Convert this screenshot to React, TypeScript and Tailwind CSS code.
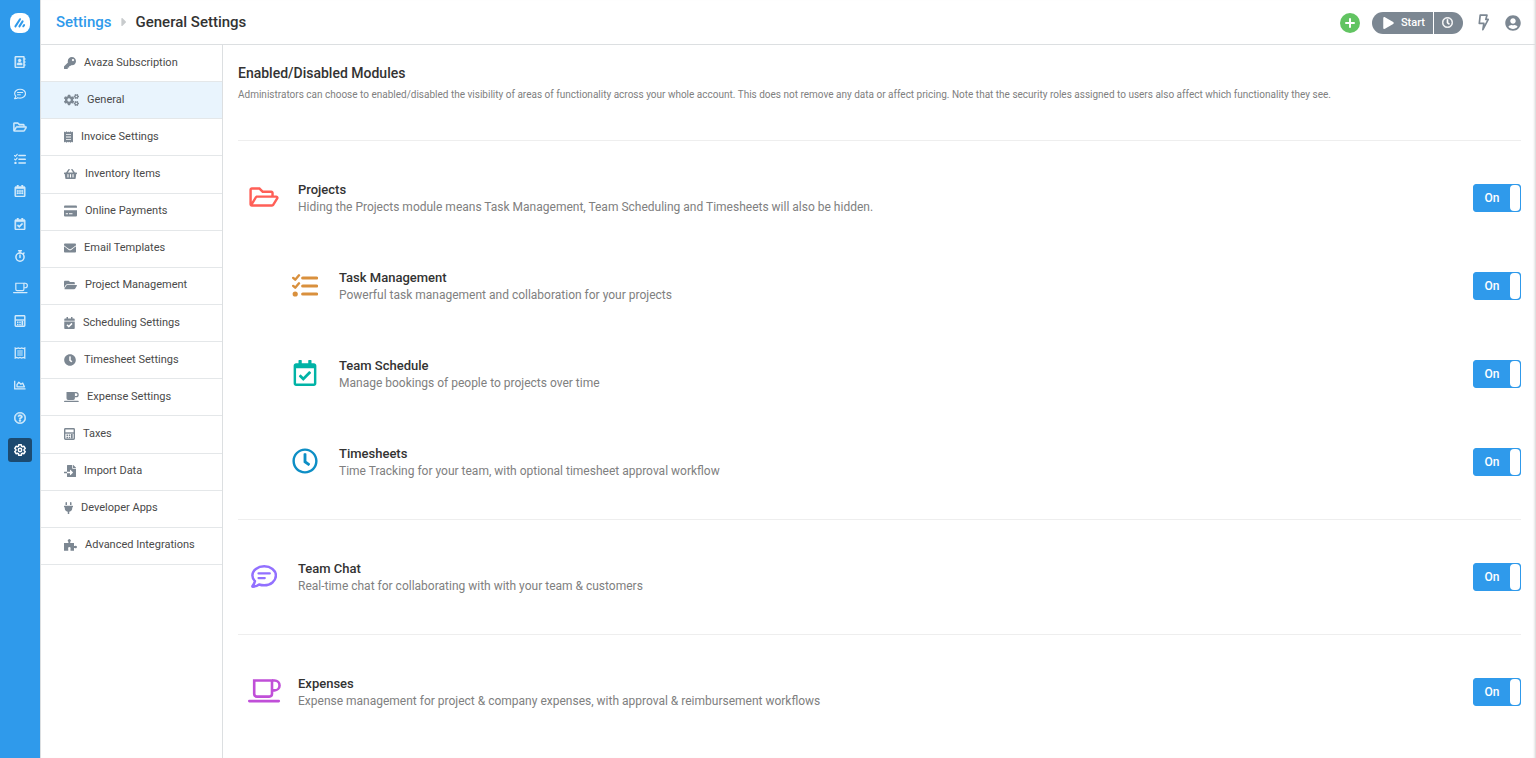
import type { ReactNode } from 'react';
import {
  FaCalendarCheck,
  FaCaretRight,
  FaClock,
  FaCogs,
  FaEnvelope,
  FaFileImport,
  FaFolderOpen,
  FaKey,
  FaPlay,
  FaPlug,
  FaRegAddressBook,
  FaRegCalendarAlt,
  FaRegCalendarCheck,
  FaRegClock,
  FaRegFolderOpen,
  FaRegQuestionCircle,
  FaShoppingBasket,
  FaUserCircle,
} from 'react-icons/fa';

interface IconProps {
  className?: string;
}

// icons
const LogoIcon = ({ className }: IconProps) => (
  <svg viewBox="0 0 20 20" className={className} fill="none" stroke="currentColor" strokeLinecap="round">
    <path d="M5.4 13.4 10 6.2M9.4 13.4 12.600 8.400" strokeWidth="2" />
    <path d="M13.300 13.300 14.100 12.100" strokeWidth="2" />
  </svg>
);

const CommentIcon = ({ className }: IconProps) => (
  <svg
    viewBox="0 0 26 23"
    className={className}
    fill="none"
    stroke="currentColor"
    strokeWidth="2.5"
    strokeLinecap="round"
    strokeLinejoin="round"
  >
    <path d="M13.2 1.3C6.7 1.3 1.4 5.4 1.4 10.4c0 2.2 1 4.200 2.600 5.700-.4 1.900-1.300 3.400-2.500 4.900-.3.4-.1.7.4.7 2.600-.1 4.700-1 6.200-2.200 1.500.5 3.200.8 5.100.8 6.500 0 11.700-4.400 11.700-9.700S19.700 1.300 13.200 1.300Z" />
    <path d="M7.500 8.400h11.300M7.500 13.100h6.300" strokeWidth="2.200" />
  </svg>
);

const TasksIcon = ({ className }: IconProps) => (
  <svg
    viewBox="0 0 26 23"
    className={className}
    fill="none"
    stroke="currentColor"
    strokeLinecap="round"
    strokeLinejoin="round"
  >
    <path d="M10.700 4h13.800M10.700 12h13.800M10.700 20h13.800" strokeWidth="3.200" />
    <path d="M1.200 3.900 3.200 5.700 7 1.300M1.200 11.900l2 1.800L7 9.300" strokeWidth="2.400" />
    <circle cx="3.200" cy="20" r="2.600" fill="currentColor" stroke="none" />
  </svg>
);

const CupIcon = ({ className }: IconProps) => (
  <svg viewBox="0 0 33 24" className={className} fill="none" stroke="currentColor" strokeWidth="2.600">
    <path d="M6.200 1.500H24v13.300a2.800 2.800 0 0 1-2.800 2.800H9a2.800 2.800 0 0 1-2.800-2.800V1.500Z" />
    <path d="M24 1.500h2.600a4.900 4.900 0 0 1 0 9.900H24" />
    <path d="M1.300 22.100h29.500" strokeLinecap="round" />
  </svg>
);

const CupSolidIcon = ({ className }: IconProps) => (
  <svg viewBox="0 0 33 24" className={className} fill="none" stroke="currentColor" strokeWidth="2.800">
    <path d="M5.500 1h18.500v14a3.500 3.500 0 0 1-3.500 3.500H9A3.500 3.500 0 0 1 5.500 15Z" fill="currentColor" stroke="none" />
    <path d="M23.500 2.400h3a4.500 4.500 0 0 1 0 9h-3" />
    <path d="M1.500 21.800h29.500" strokeLinecap="round" />
  </svg>
);

const StopwatchIcon = ({ className }: IconProps) => (
  <svg viewBox="0 0 22 24" className={className} fill="none" stroke="currentColor" strokeWidth="3" strokeLinecap="round">
    <circle cx="11" cy="14.200" r="8.200" />
    <path d="M11 10v5M8.200 1.500h5.600M11 1.500v4M17.400 7.600l1.600-1.600" />
  </svg>
);

const CalculatorIcon = ({ className }: IconProps) => (
  <svg viewBox="0 0 22 24" className={className} fill="none" stroke="currentColor">
    <rect x="1.400" y="1.400" width="19.200" height="21.200" rx="1.500" strokeWidth="2.800" />
    <path d="M2 10h18" strokeWidth="2.800" />
    <path d="M5 14.500h3M9.500 14.500h3M5 19h3M9.500 19h3" strokeWidth="3" />
    <path d="M15.700 12v9" strokeWidth="3.400" />
  </svg>
);

const ReceiptIcon = ({ className }: IconProps) => (
  <svg viewBox="0 0 22 24" className={className} fill="none" stroke="currentColor" strokeWidth="2.600">
    <path d="M1.500 2 4.500 3.200 7.500 2l3.500 1.200L14.500 2l3 1.200L20.500 2v20l-3-1.200-3 1.200-3.500-1.200L7.500 22l-3-1.200L1.500 22Z" />
    <path d="M5.500 8h11M5.500 12h11M5.500 16h11" strokeWidth="2.200" />
  </svg>
);

const ReceiptSolidIcon = ({ className }: IconProps) => (
  <svg viewBox="0 0 18 24" className={className} fill="currentColor">
    <path
      fillRule="evenodd"
      d="M0 .8 2.400 2.400 5 .4l2.600 2L9 1l1.400 1.400 2.600-2 2.600 2L18 .8v22.400l-2.400-1.600-2.600 2-2.600-2L9 23l-1.400-1.400-2.600 2-2.600-2L0 23.200ZM4 6.400v1.800h10V6.400ZM4 11.100v1.800h10v-1.800ZM4 15.800v1.800h10v-1.800Z"
    />
  </svg>
);

const ChartIcon = ({ className }: IconProps) => (
  <svg viewBox="0 0 26 20" className={className} fill="none" stroke="currentColor" strokeWidth="2.800" strokeLinejoin="round">
    <path d="M1.500 1v17.500H25" />
    <path d="M6.500 14V9l4-5 4.500 4.500 4-2.500 3.500 8Z" />
  </svg>
);

const GearIcon = ({ className }: IconProps) => (
  <svg viewBox="0 0 24 24" className={className} fill="none" stroke="currentColor" strokeWidth="3" strokeLinejoin="round">
    <path d="M9.500 1.500h5l.6 3 1.900 1.100 2.900-1 2.500 4.300L20.100 11v2l2.300 2.100-2.500 4.300-2.900-1-1.900 1.100-.6 3h-5l-.6-3L7 18.400l-2.900 1-2.500-4.300L3.900 13v-2L1.600 8.900l2.500-4.300 2.900 1 1.900-1.100Z" />
    <circle cx="12" cy="12" r="3.400" />
  </svg>
);

const CardIcon = ({ className }: IconProps) => (
  <svg viewBox="0 0 26 22" className={className} fill="currentColor">
    <path d="M2 0h22a2 2 0 0 1 2 2v2.500H0V2a2 2 0 0 1 2-2Z" />
    <path fillRule="evenodd" d="M0 9.500h26V20a2 2 0 0 1-2 2H2a2 2 0 0 1-2-2ZM3.500 15.500v2H8v-2ZM10 15.500v2h7v-2Z" />
  </svg>
);

const PuzzleIcon = ({ className }: IconProps) => (
  <svg viewBox="0 0 26 23" className={className} fill="currentColor">
    <path d="M0 7.500h8.800V5.200a3 3 0 1 1 3.600 0v2.300H20V13.500h1.500a2.600 2.600 0 1 1 0 4H20V23h-7v-4a2.500 2.500 0 1 0-4.500 0v4H0Z" />
  </svg>
);

const BoltIcon = ({ className }: IconProps) => (
  <svg viewBox="0 0 12 18" className={className} fill="none" stroke="currentColor" strokeWidth="1.800" strokeLinejoin="round">
    <path d="M2.400 1h7.400L8.500 5.600h2.700L5.300 16.800l1.100-6.800H1.400Z" />
  </svg>
);

const PlusIcon = ({ className }: IconProps) => (
  <svg viewBox="0 0 12 12" className={className} fill="none" stroke="currentColor" strokeWidth="2" strokeLinecap="round">
    <path d="M6 2v8M2 6h8" />
  </svg>
);

const railItems = [
  { label: 'Contacts', icon: <FaRegAddressBook className="w-3 h-3 stroke-current stroke-[20px]" /> },
  { label: 'Chat', icon: <CommentIcon className="w-3 h-3" /> },
  { label: 'Projects', icon: <FaRegFolderOpen className="w-[14px] h-3 stroke-current stroke-[20px]" /> },
  { label: 'Tasks', icon: <TasksIcon className="w-3 h-3" /> },
  { label: 'Calendar', icon: <FaRegCalendarAlt className="w-3 h-3 stroke-current stroke-[20px]" /> },
  { label: 'Schedule', icon: <FaRegCalendarCheck className="w-3 h-3 stroke-current stroke-[20px]" /> },
  { label: 'Timesheets', icon: <StopwatchIcon className="w-3 h-3" /> },
  { label: 'Expenses', icon: <CupIcon className="w-[15px] h-3" /> },
  { label: 'Estimates', icon: <CalculatorIcon className="w-3 h-3" /> },
  { label: 'Invoices', icon: <ReceiptIcon className="w-3 h-3" /> },
  { label: 'Reports', icon: <ChartIcon className="w-3 h-3" /> },
  { label: 'Help', icon: <FaRegQuestionCircle className="w-3 h-3 stroke-current stroke-[20px]" /> },
  { label: 'Settings', icon: <GearIcon className="w-3 h-3" />, active: true },
];

const navItems = [
  { label: 'Avaza Subscription', icon: <FaKey className="w-3 h-3" /> },
  { label: 'General', icon: <FaCogs className="w-[15px] h-3" />, active: true },
  { label: 'Invoice Settings', icon: <ReceiptSolidIcon className="w-[9px] h-3" /> },
  { label: 'Inventory Items', icon: <FaShoppingBasket className="w-[13px] h-3" /> },
  { label: 'Online Payments', icon: <CardIcon className="w-[13px] h-3" /> },
  { label: 'Email Templates', icon: <FaEnvelope className="w-3 h-3" /> },
  { label: 'Project Management', icon: <FaFolderOpen className="w-[13px] h-3" /> },
  { label: 'Scheduling Settings', icon: <FaCalendarCheck className="w-[11px] h-3" /> },
  { label: 'Timesheet Settings', icon: <FaClock className="w-3 h-3" /> },
  { label: 'Expense Settings', icon: <CupSolidIcon className="w-[15px] h-3" /> },
  { label: 'Taxes', icon: <CalculatorIcon className="w-[11px] h-3" /> },
  { label: 'Import Data', icon: <FaFileImport className="w-3 h-3" /> },
  { label: 'Developer Apps', icon: <FaPlug className="w-[9px] h-3" /> },
  { label: 'Advanced Integrations', icon: <PuzzleIcon className="w-[13px] h-3" /> },
];

interface Module {
  title: string;
  description: string;
  icon: ReactNode;
  nested?: boolean;
}

const sections: Module[][] = [
  [
    {
      title: 'Projects',
      description: 'Hiding the Projects module means Task Management, Team Scheduling and Timesheets will also be hidden.',
      icon: <FaRegFolderOpen className="w-[30px] h-[26px] text-[#ff5f57]" />,
    },
    {
      title: 'Task Management',
      description: 'Powerful task management and collaboration for your projects',
      icon: <TasksIcon className="w-[26px] h-[23px] text-[#d9903d]" />,
      nested: true,
    },
    {
      title: 'Team Schedule',
      description: 'Manage bookings of people to projects over time',
      icon: <FaRegCalendarCheck className="w-[26px] h-[26px] text-[#00b3a6]" />,
      nested: true,
    },
    {
      title: 'Timesheets',
      description: 'Time Tracking for your team, with optional timesheet approval workflow',
      icon: <FaRegClock className="w-[26px] h-[26px] text-[#0d8ec5]" />,
      nested: true,
    },
  ],
  [
    {
      title: 'Team Chat',
      description: 'Real-time chat for collaborating with with your team & customers',
      icon: <CommentIcon className="w-[26px] h-[23px] text-[#9270ff]" />,
    },
  ],
  [
    {
      title: 'Expenses',
      description: 'Expense management for project & company expenses, with approval & reimbursement workflows',
      icon: <CupIcon className="w-[33px] h-6 text-[#c04fd8]" />,
    },
  ],
];

const Rail = () => (
  <nav className="flex flex-col items-center shrink-0 w-10 pt-[13px] bg-[#2f9aeb] text-[#d5ebfb]">
    <a
      href="#home"
      aria-label="Home"
      className="flex items-center justify-center w-5 h-5 rounded-lg bg-white text-[#2f9aeb]"
    >
      <LogoIcon className="w-5 h-5" />
    </a>
    <ul className="flex flex-col justify-between h-[412px] mt-[17px]">
      {railItems.map(({ label, icon, active }) => (
        <li key={label}>
          <a
            href={`#${label.toLowerCase()}`}
            aria-label={label}
            className={`flex items-center justify-center w-6 h-6 rounded-[3px] ${active ? 'bg-[#1c4a70] text-white' : ''}`}
          >
            {icon}
          </a>
        </li>
      ))}
    </ul>
  </nav>
);

const Header = () => (
  <header className="flex items-center justify-between h-[45px] px-[15px] border-b border-[#dcdfe1]">
    <h1 className="flex items-center text-[15px] font-medium">
      <a href="#settings" className="text-[#2f9aeb]">
        Settings
      </a>
      <FaCaretRight className="w-[14px] h-[14px] mx-[5px] text-[#c8cbcd]" />
      <span>General Settings</span>
    </h1>
    <div className="flex items-center pt-px text-[#7c8792]">
      <button
        type="button"
        aria-label="Add"
        className="flex items-center justify-center w-5 h-5 mr-3 rounded-full bg-[#62c462] text-white"
      >
        <PlusIcon className="w-3 h-3" />
      </button>
      <div className="flex h-[22px] mr-[15px] rounded-full bg-[#7c8792] text-white overflow-hidden">
        <button type="button" className="flex items-center gap-[7px] pl-[11px] pr-2 text-[11px] leading-[18px] font-medium">
          <FaPlay className="w-[11px] h-3" />
          Start
        </button>
        <button type="button" aria-label="Timer" className="pl-2 pr-[10px] border-l border-white">
          <FaRegClock className="w-[11px] h-[11px] stroke-current stroke-[20px]" />
        </button>
      </div>
      <button type="button" aria-label="Activity" className="mr-4">
        <BoltIcon className="w-[11px] h-[17px]" />
      </button>
      <button type="button" aria-label="Account">
        <FaUserCircle className="w-4 h-4" />
      </button>
    </div>
  </header>
);

const SettingsNav = () => (
  <nav className="shrink-0 w-[182px] border-r border-[#dcdfe1]">
    <ul className="flex flex-col min-h-[520px]">
      {navItems.map(({ label, icon, active }) => (
        <li key={label} className={`flex flex-1 border-b border-[#e4e7e9] ${active ? 'bg-[#e9f4fd]' : ''}`}>
          <a
            href="#section"
            className="flex flex-1 items-center gap-2 pl-[23px] pb-px text-[11px] leading-[18px] text-[#4a4a4a]"
          >
            <span className="text-[#7c8792]">{icon}</span>
            {label}
          </a>
        </li>
      ))}
    </ul>
  </nav>
);

const Toggle = ({ label }: { label: string }) => (
  <button
    type="button"
    role="switch"
    aria-checked="true"
    aria-label={label}
    className="flex shrink-0 w-12 h-7 rounded-[3px] border border-[#2f9aeb] bg-[#2f9aeb] text-white text-xs font-medium"
  >
    <span className="flex flex-1 self-stretch items-center justify-center">On</span>
    <span className="self-stretch w-[10px] rounded-sm bg-white" />
  </button>
);

const ModuleRow = ({ title, description, icon, nested }: Module) => (
  <div className={`flex items-center h-[88px] ${nested ? 'pl-[41px]' : ''}`}>
    <div className="flex justify-center shrink-0 w-[52px] pb-[2px]">{icon}</div>
    <div className="flex-1 pl-2">
      <h3 className="text-[13px] leading-[18px] font-medium">{title}</h3>
      <p className="text-xs leading-[17px] text-[#808080]">{description}</p>
    </div>
    <Toggle label={title} />
  </div>
);

const App = () => {
  return (
    <div className="flex min-h-screen bg-white font-[Roboto,sans-serif] text-[#333]">
      <Rail />
      <div className="flex flex-col flex-1 min-w-0 border-l border-[#dcdfe1] shadow-[inset_-3px_0_3px_-2px_#d0d0d0]">
        <Header />
        <div className="flex flex-1">
          <SettingsNav />
          <main className="flex-1 min-w-0 px-[15px] pt-[18px]">
            <h2 className="text-sm leading-5 font-medium">Enabled/Disabled Modules</h2>
            <p className="pt-1 pb-[37px] text-[10px] leading-4 text-[#808080]">
              Administrators can choose to enabled/disabled the visibility of areas of functionality across your whole
              account. This does not remove any data or affect pricing. Note that the security roles assigned to users
              also affect which functionality they see.
            </p>
            {sections.map((modules) => (
              <section key={modules[0].title} className="py-[13px] border-t border-[#eeeeee]">
                {modules.map((module) => (
                  <ModuleRow key={module.title} {...module} />
                ))}
              </section>
            ))}
          </main>
        </div>
      </div>
    </div>
  );
};

export default App;
